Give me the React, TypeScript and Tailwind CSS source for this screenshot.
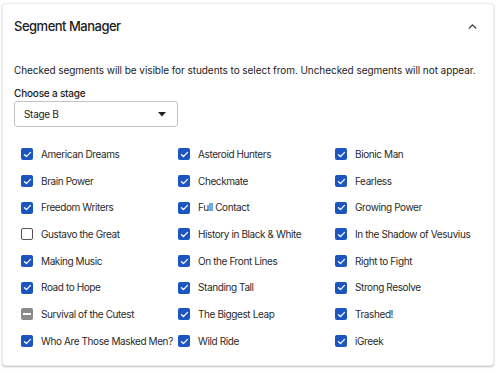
import { ChevronUp } from "lucide-react";

const segments: { name: string; state: "on" | "off" | "mixed" }[] = [
  { name: "American Dreams", state: "on" },
  { name: "Asteroid Hunters", state: "on" },
  { name: "Bionic Man", state: "on" },
  { name: "Brain Power", state: "on" },
  { name: "Checkmate", state: "on" },
  { name: "Fearless", state: "on" },
  { name: "Freedom Writers", state: "on" },
  { name: "Full Contact", state: "on" },
  { name: "Growing Power", state: "on" },
  { name: "Gustavo the Great", state: "off" },
  { name: "History in Black & White", state: "on" },
  { name: "In the Shadow of Vesuvius", state: "on" },
  { name: "Making Music", state: "on" },
  { name: "On the Front Lines", state: "on" },
  { name: "Right to Fight", state: "on" },
  { name: "Road to Hope", state: "on" },
  { name: "Standing Tall", state: "on" },
  { name: "Strong Resolve", state: "on" },
  { name: "Survival of the Cutest", state: "mixed" },
  { name: "The Biggest Leap", state: "on" },
  { name: "Trashed!", state: "on" },
  { name: "Who Are Those Masked Men?", state: "on" },
  { name: "Wild Ride", state: "on" },
  { name: "iGreek", state: "on" },
];

const Box = ({ state }: { state: "on" | "off" | "mixed" }) => {
  if (state === "off") {
    return <span className="w-[12px] h-[12px] rounded-[2px] border-[1.5px] border-[#555] bg-white shrink-0" />;
  }
  if (state === "mixed") {
    return (
      <span className="w-[12px] h-[12px] rounded-[2px] bg-[#8a8a8a] shrink-0 flex items-center justify-center">
        <span className="w-[8px] h-[2px] bg-white" />
      </span>
    );
  }
  return (
    <span className="w-[12px] h-[12px] rounded-[2px] bg-[#1a55c0] shrink-0 flex items-center justify-center">
      <svg width="9" height="9" viewBox="0 0 12 12" fill="none">
        <path d="M2 6.2l2.6 2.6L10 3.2" stroke="white" strokeWidth={1.8} strokeLinecap="round" strokeLinejoin="round" />
      </svg>
    </span>
  );
};

export default function App() {
  return (
    <div className="w-[500px] h-[373px] bg-white pt-[3px] pl-[2px] font-['Inter',sans-serif] text-[#222]">
      <div className="w-[492px] h-[363px] rounded-[4px] border border-[#ececec] shadow-[0_1px_2px_rgba(0,0,0,0.25)] bg-white">
        <div className="flex items-center justify-between pl-[11px] pr-[14px] pt-[12px]">
          <h2 className="text-[13px] tracking-[-0.5px] font-medium leading-[20px] text-[#1c1c1c]">Segment Manager</h2>
          <ChevronUp size={13} strokeWidth={2.4} className="text-[#333]" />
        </div>
        <div className="px-[11px] pt-[27px]">
          <p className="text-[10px] tracking-[-0.06px] leading-[14px] text-[#222] whitespace-nowrap">
            Checked segments will be visible for students to select from. Unchecked segments will not appear.
          </p>
          <div className="mt-[9px] text-[10px] tracking-[-0.2px] font-medium leading-[14px] text-[#1c1c1c]">Choose a stage</div>
          <div className="mt-[1px] w-[164px] h-[26px] border border-[#c4c4c4] rounded-[3px] flex items-center justify-between pl-[9px] pr-[11px]">
            <span className="text-[10px] tracking-[-0.3px] text-[#222]">Stage B</span>
            <svg width="8" height="5" viewBox="0 0 8 5">
              <path d="M0 0h8L4 4.5z" fill="#222" />
            </svg>
          </div>
        </div>
        <div className="grid grid-cols-[157px_157px_157px] pl-[18px] pt-[14px]">
          {segments.map((s) => (
            <div key={s.name} className="h-[26.7px] flex items-center gap-[8px]">
              <Box state={s.state} />
              <span className="text-[10px] tracking-[-0.4px] text-[#2a2a2a] whitespace-nowrap">{s.name}</span>
            </div>
          ))}
        </div>
      </div>
    </div>
  );
}
